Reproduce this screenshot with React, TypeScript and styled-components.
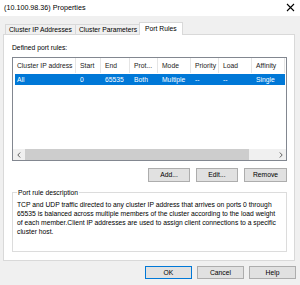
import React from 'react';
import styled, { createGlobalStyle } from 'styled-components';

const GlobalStyle = createGlobalStyle`
  html, body {
    margin: 0;
    padding: 0;
    background: #f0f0f0;
  }
  body {
    font-family: "Liberation Sans", Arial, sans-serif;
    font-size: 6.75px;
    color: #000;
  }
  * {
    box-sizing: border-box;
  }
`;

const Window = styled.div`
  width: 300px;
  height: 285px;
  background: #f0f0f0;
  display: flex;
  flex-direction: column;
  overflow: hidden;
`;

const TitleBar = styled.div`
  height: 16px;
  flex: none;
  background: #fff;
  display: flex;
  align-items: center;
  padding: 0 5px 2px 4px;
  font-size: 7.2px;
`;

const TitleText = styled.span`
  flex: 1;
  white-space: nowrap;
`;

const CloseButton = styled.svg`
  flex: none;
  display: block;
  width: 9px;
  height: 9px;
`;

const Body = styled.div`
  display: flex;
  flex-direction: column;
  padding: 6px 5px 0 3px;
`;

const TabStrip = styled.div`
  display: flex;
  align-items: flex-end;
  height: 12px;
  padding-left: 2px;
`;

const Tab = styled.div<{ $active?: boolean }>`
  height: ${(p) => (p.$active ? '13px' : '10px')};
  margin: ${(p) => (p.$active ? '0 -2px -1px -2px' : '0 0 0 -1px')};
  padding: ${(p) => (p.$active ? '1px 5px 0' : '0 3px')};
  border: 1px solid #d9d9d9;
  border-bottom: none;
  background: ${(p) => (p.$active ? '#fff' : '#f0f0f0')};
  line-height: 9px;
  white-space: nowrap;
  position: relative;
  z-index: ${(p) => (p.$active ? 1 : 0)};

  &:first-child {
    margin-left: 0;
  }
`;

const Panel = styled.div`
  height: 227px;
  background: #fff;
  border: 1px solid #d9d9d9;
  display: flex;
  flex-direction: column;
  padding: 0 7px 0 8px;
`;

const Caption = styled.div`
  line-height: 9px;
  margin-top: 8px;
  white-space: nowrap;
`;

const ListBox = styled.div`
  height: 104px;
  margin-top: 5px;
  border: 1px solid #828790;
  display: flex;
  flex-direction: column;
`;

const Columns = styled.div<{ $row?: boolean }>`
  display: grid;
  grid-template-columns: ${(p) => (p.$row ? '61px' : '63px')} 25px 29px 28px 33px 28px 33px 33px;
  margin-left: ${(p) => (p.$row ? '2px' : '0')};
  width: ${(p) => (p.$row ? '270px' : '272px')};
`;

const HeadCell = styled.div`
  height: 15px;
  line-height: 15px;
  padding-left: 4px;
  border-right: 1px solid #e5e5e5;
  color: #1a1a1a;
  white-space: nowrap;
  overflow: hidden;
`;

const RowCell = styled.div<{ $first?: boolean }>`
  height: 11px;
  line-height: 11px;
  padding-left: ${(p) => (p.$first ? '2px' : '4px')};
  background: #0078d7;
  color: #fff;
  white-space: nowrap;
  overflow: hidden;
`;

const Row = styled(Columns)`
  margin-top: 1px;
`;

const Filler = styled.div`
  flex: 1;
`;

const ScrollBar = styled.div`
  height: 11px;
  display: flex;
  background: #f0f0f0;
`;

const ScrollArrow = styled.div`
  width: 11px;
  display: flex;
  align-items: center;
  justify-content: center;
`;

const ScrollThumb = styled.div`
  width: 224px;
  margin-left: 1px;
  background: #cdcdcd;
`;

const ScrollTrack = styled.div`
  flex: 1;
`;

const ButtonRow = styled.div<{ $gap: number }>`
  display: flex;
  justify-content: flex-end;
  gap: ${(p) => p.$gap}px;
`;

const ActionRow = styled(ButtonRow)`
  margin-top: 7px;
`;

const DialogRow = styled(ButtonRow)`
  margin-top: 5px;
  margin-right: -1px;
`;

const Button = styled.div<{ $w: number; $h: number; $default?: boolean }>`
  width: ${(p) => p.$w}px;
  height: ${(p) => p.$h}px;
  line-height: ${(p) => p.$h - 2}px;
  text-align: center;
  background: #e1e1e1;
  border: 1px solid ${(p) => (p.$default ? '#0078d7' : '#adadad')};
`;

const Group = styled.fieldset`
  margin: 6px 0 0;
  padding: 0 4px 0 4px;
  min-width: 0;
  height: 64px;
  border: 1px solid #dcdcdc;
`;

const GroupLabel = styled.legend`
  padding: 0 1px;
  line-height: 9px;
`;

const Description = styled.div`
  margin-top: 3px;
  line-height: 9px;
`;

const Line = styled.div`
  white-space: nowrap;
`;

const Chevron = ({ dir }: { dir: 'left' | 'right' }) => (
  <svg width="4" height="6" viewBox="0 0 4 6">
    <polyline
      points={dir === 'left' ? '3.2,0.5 0.8,3 3.2,5.5' : '0.8,0.5 3.2,3 0.8,5.5'}
      fill="none"
      stroke="#606060"
      strokeWidth="1"
    />
  </svg>
);

const headers = ['Cluster IP address', 'Start', 'End', 'Prot...', 'Mode', 'Priority', 'Load', 'Affinity'];
const rule = ['All', '0', '65535', 'Both', 'Multiple', '--', '--', 'Single'];

const descriptionLines = [
  'TCP and UDP traffic directed to any cluster IP address that arrives on ports 0 through',
  '65535 is balanced across multiple members of the cluster according to the load weight',
  'of each member.Client IP addresses are used to assign client connections to a specific',
  'cluster host.',
];

export default function App() {
  return (
    <>
      <GlobalStyle />
      <Window>
        <TitleBar>
          <TitleText>(10.100.98.36) Properties</TitleText>
          <CloseButton viewBox="0 0 9 9">
            <path d="M1 1 L8 8 M8 1 L1 8" stroke="#000" strokeWidth="1.1" fill="none" />
          </CloseButton>
        </TitleBar>
        <Body>
          <TabStrip>
            <Tab>Cluster IP Addresses</Tab>
            <Tab>Cluster Parameters</Tab>
            <Tab $active>Port Rules</Tab>
          </TabStrip>
          <Panel>
            <Caption>Defined port rules:</Caption>
            <ListBox>
              <Columns>
                {headers.map((h) => (
                  <HeadCell key={h}>{h}</HeadCell>
                ))}
              </Columns>
              <Row $row>
                {rule.map((v, i) => (
                  <RowCell key={i} $first={i === 0}>{v}</RowCell>
                ))}
              </Row>
              <Filler />
              <ScrollBar>
                <ScrollArrow><Chevron dir="left" /></ScrollArrow>
                <ScrollThumb />
                <ScrollTrack />
                <ScrollArrow><Chevron dir="right" /></ScrollArrow>
              </ScrollBar>
            </ListBox>
            <ActionRow $gap={6}>
              <Button $w={42} $h={14}>Add...</Button>
              <Button $w={42} $h={14}>Edit...</Button>
              <Button $w={43} $h={14}>Remove</Button>
            </ActionRow>
            <Group>
              <GroupLabel>Port rule description</GroupLabel>
              <Description>
                {descriptionLines.map((l) => (
                  <Line key={l}>{l}</Line>
                ))}
              </Description>
            </Group>
          </Panel>
          <DialogRow $gap={5}>
            <Button $w={47} $h={13} $default>OK</Button>
            <Button $w={47} $h={13}>Cancel</Button>
            <Button $w={47} $h={13}>Help</Button>
          </DialogRow>
        </Body>
      </Window>
    </>
  );
}
